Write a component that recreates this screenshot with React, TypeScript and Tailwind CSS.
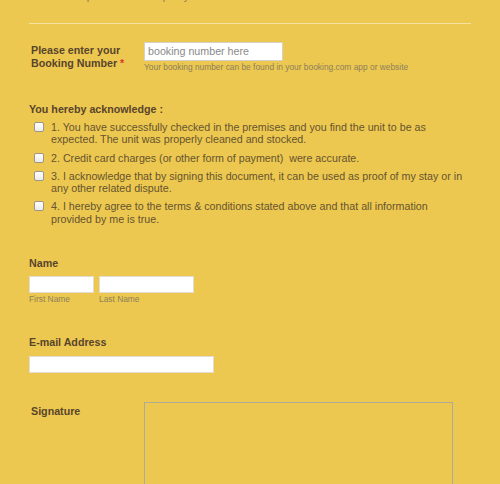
const ITEMS = [
  "1. You have successfully checked in the premises and you find the unit to be as expected. The unit was properly cleaned and stocked.",
  "2. Credit card charges (or other form of payment)\u00a0 were accurate.",
  "3. I acknowledge that by signing this document, it can be used as proof of my stay or in any other related dispute.",
  "4. I hereby agree to the terms & conditions stated above and that all information provided by me is true.",
];

function TextBox({ className = "" }: { className?: string }) {
  return <div className={`h-[17px] bg-white border border-[#e2ddd0] ${className}`} />;
}

export default function App() {
  return (
    <div className="w-[500px] h-[484px] overflow-hidden bg-[#ecc850] font-['Liberation_Sans',Arial,sans-serif] text-[#59442c]">
      {/* tail of the heading above, scrolled off */}
      <div className="h-[3px] overflow-hidden px-[31px]">
        <div className="-mt-[10px] text-[10.7px] leading-[12px] text-[#8a7a55]">
          Please complete this form upon your arrival
        </div>
      </div>
      <div className="mx-[29px] mt-[20px] border-t border-[#f3e2a4]" />

      <div className="px-[29px]">
        {/* booking number */}
        <div className="mt-[18px] flex">
          <div className="w-[115px] pl-[2px] pt-[2px] text-[10.7px] font-bold leading-[13px]">
            Please enter your
            <br />
            Booking Number <span className="text-[#e0382c]">*</span>
          </div>
          <div>
            <div className="w-[139px] h-[19px] bg-white border border-[#d6d2c8] pl-[3px] text-[10.7px] leading-[17px] text-[#8a8a8a]">
              booking number here
            </div>
            <div className="mt-[1px] text-[8.4px] leading-[11px] text-[#8c7f5c]">
              Your booking number can be found in your booking.com app or website
            </div>
          </div>
        </div>

        {/* acknowledgements */}
        <div className="mt-[29px] text-[10.7px] font-bold leading-[14px]">You hereby acknowledge :</div>
        <div className="mt-[5px] pl-[5px] flex flex-col gap-[6px]">
          {ITEMS.map((t) => (
            <div key={t} className="flex gap-[7px]">
              <div className="mt-[1px] w-[10px] h-[10px] shrink-0 rounded-[2px] border border-[#9b978e] bg-gradient-to-b from-white to-[#ecebe8]" />
              <div className="w-[418px] text-[10.7px] leading-[12.3px] text-[#67532f]">{t}</div>
            </div>
          ))}
        </div>

        {/* name */}
        <div className="mt-[31px] text-[10.7px] font-bold leading-[14px]">Name</div>
        <div className="mt-[6px] flex gap-[5px]">
          <div>
            <TextBox className="w-[65px]" />
            <div className="mt-[1px] text-[8.4px] leading-[11px] text-[#8c7f5c]">First Name</div>
          </div>
          <div>
            <TextBox className="w-[95px]" />
            <div className="mt-[1px] text-[8.4px] leading-[11px] text-[#8c7f5c]">Last Name</div>
          </div>
        </div>

        {/* email */}
        <div className="mt-[30px] text-[10.7px] font-bold leading-[14px]">E-mail Address</div>
        <TextBox className="mt-[7px] w-[185px]" />

        {/* signature */}
        <div className="mt-[29px] flex">
          <div className="w-[115px] pl-[2px] pt-[2px] text-[10.7px] font-bold leading-[14px]">Signature</div>
          <div className="w-[309px] h-[100px] border border-[#b0aa98]" />
        </div>
      </div>
    </div>
  );
}
